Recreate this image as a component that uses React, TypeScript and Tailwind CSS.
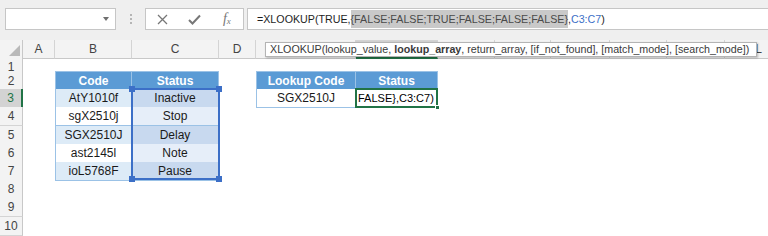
import type { ReactNode } from "react";

type CellKind = "head" | "band" | "plain" | "selBand" | "selPlain" | "edit";

type Cell = {
  kind: CellKind;
  text: ReactNode;
  left?: boolean;
  top?: boolean;
};

// E..K headers sit under the argument tooltip, so their letters are not shown
const COLS = [
  { k: "A", show: true },
  { k: "B", show: true },
  { k: "C", show: true },
  { k: "D", show: true },
  { k: "E", show: false },
  { k: "F", show: false },
  { k: "G", show: false },
  { k: "H", show: false },
  { k: "I", show: false },
  { k: "J", show: false },
  { k: "K", show: false },
  { k: "L", show: true },
];

const GRID =
  "grid grid-cols-[23px_32px_77px_87px_37px_100px_82px_57px_56px_59px_57px_58px_68px]";

const ROWS = [
  { n: 1, h: "h-[13px]" },
  { n: 2, h: "h-[18.2px]" },
  { n: 3, h: "h-[18.2px]" },
  { n: 4, h: "h-[18.2px]" },
  { n: 5, h: "h-[18.2px]" },
  { n: 6, h: "h-[18.2px]" },
  { n: 7, h: "h-[18.2px]" },
  { n: 8, h: "h-[18.2px]" },
  { n: 9, h: "h-[18.2px]" },
  { n: 10, h: "h-[18.2px]" },
];

const CELLS: Record<string, Cell> = {
  B2: { kind: "head", text: "Code", left: true, top: true },
  C2: { kind: "head", text: "Status", top: true },
  B3: { kind: "band", text: "AtY1010f", left: true },
  C3: { kind: "selBand", text: "Inactive" },
  B4: { kind: "plain", text: "sgX2510j", left: true },
  C4: { kind: "selPlain", text: "Stop" },
  B5: { kind: "band", text: "SGX2510J", left: true },
  C5: { kind: "selBand", text: "Delay" },
  B6: { kind: "plain", text: "ast2145l", left: true },
  C6: { kind: "selPlain", text: "Note" },
  B7: { kind: "band", text: "ioL5768F", left: true },
  C7: { kind: "selBand", text: "Pause" },
  E2: { kind: "head", text: "Lookup Code", left: true, top: true },
  F2: { kind: "head", text: "Status", top: true },
  E3: { kind: "plain", text: "SGX2510J", left: true },
  F3: { kind: "edit", text: "FALSE},C3:C7)" },
};

const KIND_CLASS: Record<CellKind, string> = {
  head: "bg-[#5b9bd5] font-bold text-white justify-center",
  band: "bg-[#ddebf7] text-[#1a1a1a] justify-center",
  plain: "bg-white text-[#1a1a1a] justify-center",
  selBand: "bg-[#c8d9ef] text-[#1a1a1a] justify-center",
  selPlain: "bg-[#e6eef9] text-[#1a1a1a] justify-center",
  edit: "bg-white text-black justify-start",
};

export default function App() {
  return (
    <div className="relative h-[236px] w-[768px] overflow-hidden bg-white font-['Liberation_Sans',Arial,sans-serif]">
      <FormulaBar />
      <Sheet />
      <ArgTooltip />
    </div>
  );
}

function FormulaBar() {
  return (
    <div className="flex h-[40px] items-start bg-[#efefef] pl-[5px] pt-[8px]">
      <div className="flex h-[22px] w-[111px] items-center justify-end border border-[#c6c6c6] bg-white pr-[6px]">
        <span className="h-0 w-0 border-x-[3.5px] border-t-[4px] border-x-transparent border-t-[#6f6f6f]" />
      </div>
      <div className="flex h-[22px] w-[29px] flex-col items-center justify-center gap-[2px]">
        <span className="h-[2px] w-[2px] bg-[#b5b5b5]" />
        <span className="h-[2px] w-[2px] bg-[#b5b5b5]" />
        <span className="h-[2px] w-[2px] bg-[#b5b5b5]" />
      </div>
      <div className="grid h-[22px] w-[99px] grid-cols-3 items-center border border-[#c6c6c6] bg-white">
        <div className="flex justify-center">
          <svg width="11" height="11" viewBox="0 0 11 11" fill="none">
            <path d="M1 1l9 9M10 1l-9 9" stroke="#777" strokeWidth="1.3" />
          </svg>
        </div>
        <div className="flex justify-center">
          <svg width="13" height="11" viewBox="0 0 13 11" fill="none">
            <path d="M1 6l3.5 3.5L12 1.5" stroke="#777" strokeWidth="2" />
          </svg>
        </div>
        <div className="flex justify-center font-['Liberation_Serif',serif] text-[14px] italic leading-none text-[#777]">
          f<span className="mt-[5px] text-[9px] leading-none">x</span>
        </div>
      </div>
      <div className="ml-[3px] flex h-[22px] flex-1 items-center whitespace-nowrap border border-r-0 border-[#c6c6c6] bg-white pl-[9px] text-[10.7px] text-[#1e1e1e]">
        <span>=XLOOKUP(TRUE,</span>
        <span className="bg-[#c9c9c9] py-[1px] text-[#4a4a4a]">
          {"{FALSE;FALSE;TRUE;FALSE;FALSE;FALSE}"}
        </span>
        <span>,</span>
        <span className="text-[#3c6fc7]">C3:C7</span>
        <span>)</span>
      </div>
    </div>
  );
}

function Sheet() {
  return (
    <div className="relative">
      <div className={`${GRID} h-[18px] bg-[#f3f3f3] text-[12px] text-[#444]`}>
        <div className="flex items-end justify-end border-b border-r border-[#c8c8c8] p-[2px]">
          <svg width="11" height="11" viewBox="0 0 11 11">
            <path d="M11 0L11 11L0 11Z" fill="#b9b9b9" />
          </svg>
        </div>
        {COLS.map((c) => (
          <div
            key={c.k}
            className={
              c.k === "F"
                ? "flex items-center justify-center border-b-2 border-r border-b-[#217346] border-r-[#d4d4d4] bg-[#d3d3d3] text-[#217346]"
                : "flex items-center justify-center border-b border-r border-b-[#c8c8c8] border-r-[#d4d4d4]"
            }
          >
            {c.show ? c.k : null}
          </div>
        ))}
      </div>
      {ROWS.map((r) => (
        <div key={r.n} className={`${GRID} ${r.h}`}>
          <div
            className={
              r.n === 3
                ? "flex items-center justify-center border-b border-r-2 border-b-[#c8c8c8] border-r-[#217346] bg-[#d3d3d3] text-[12px] text-[#217346]"
                : "flex items-center justify-center border-b border-r border-b-[#d4d4d4] border-r-[#c8c8c8] bg-[#f3f3f3] text-[12px] text-[#444]"
            }
          >
            {r.n}
          </div>
          {COLS.map((c) => (
            <SheetCell key={c.k} cell={CELLS[`${c.k}${r.n}`]} />
          ))}
        </div>
      ))}
      <Selection />
    </div>
  );
}

function SheetCell({ cell }: { cell?: Cell }) {
  if (!cell) return <div />;

  const edges = [
    "border-r border-b border-[#9bc2e6]",
    cell.left ? "border-l" : "",
    cell.top ? "border-t" : "",
  ].join(" ");

  if (cell.kind === "edit") {
    return (
      <div
        className={`relative flex items-center overflow-visible whitespace-nowrap pl-[2px] text-[11px] ${KIND_CLASS.edit} ${edges}`}
      >
        {cell.text}
        <span className="absolute inset-[-1px] border-2 border-[#217346]" />
        <span className="absolute bottom-[-3px] right-[-3px] h-[5px] w-[5px] border border-white bg-[#217346]" />
      </div>
    );
  }

  return (
    <div
      className={`flex items-center whitespace-nowrap text-[12px] ${KIND_CLASS[cell.kind]} ${edges}`}
    >
      {cell.text}
    </div>
  );
}

function Selection() {
  return (
    <div className="pointer-events-none absolute left-[131px] top-[48px] h-[92px] w-[89px] border-2 border-[#3c6fc7]">
      <span className="absolute left-[-4px] top-[-4px] h-[6px] w-[6px] bg-[#3c6fc7]" />
      <span className="absolute right-[-4px] top-[-4px] h-[6px] w-[6px] bg-[#3c6fc7]" />
      <span className="absolute bottom-[-4px] left-[-4px] h-[6px] w-[6px] bg-[#3c6fc7]" />
      <span className="absolute bottom-[-4px] right-[-4px] h-[6px] w-[6px] bg-[#3c6fc7]" />
    </div>
  );
}

function ArgTooltip() {
  return (
    <div className="absolute left-[265px] top-[42px] flex h-[15px] w-[492px] items-center whitespace-nowrap border border-[#b4b4b4] bg-white pl-[4px] text-[10.7px] text-[#3a3a3a] shadow-[1px_1px_2px_rgba(0,0,0,0.25)]">
      <span className="whitespace-pre">XLOOKUP(lookup_value, </span>
      <b className="font-bold">lookup_array</b>
      <span className="whitespace-pre">, return_array, [if_not_found], [match_mode], [search_mode])</span>
    </div>
  );
}
